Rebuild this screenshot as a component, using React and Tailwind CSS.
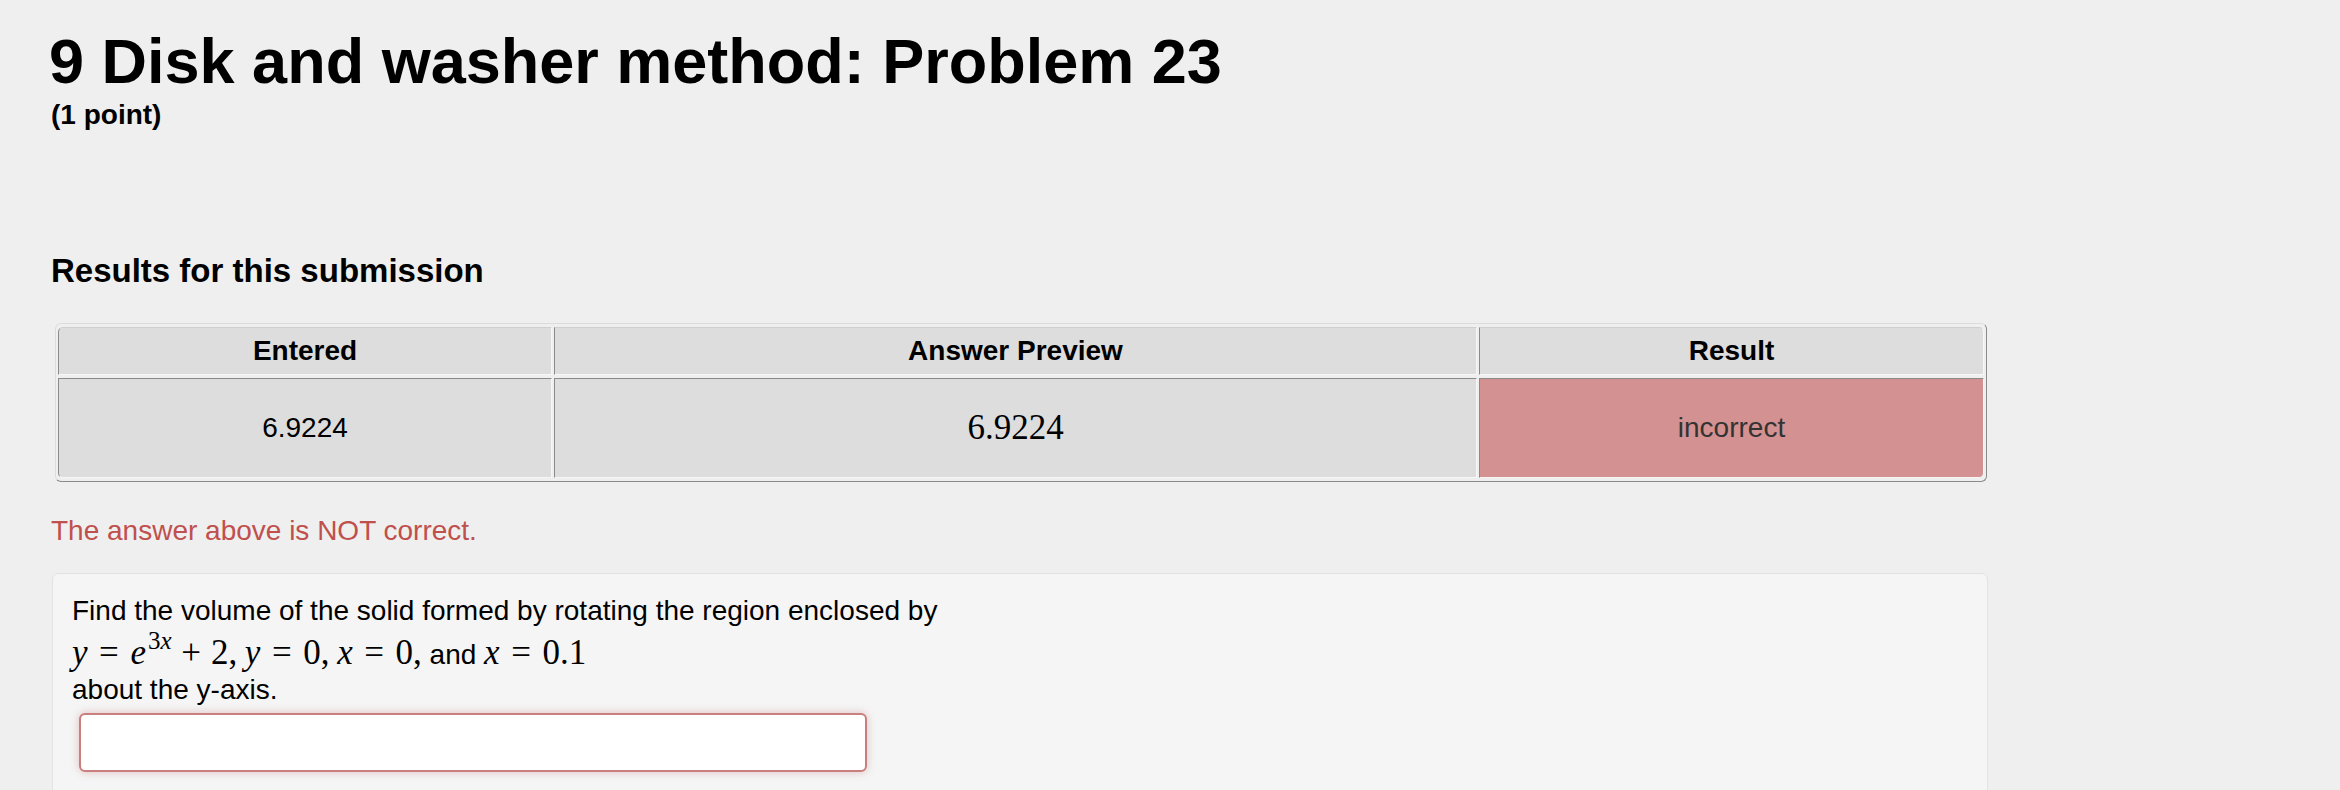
export default function App() {
  const th = 'h-[48px] p-0 text-center align-middle font-bold border border-t-[#cfcfcf] border-l-[#8a8a8a] border-r-[#f6f6f6] border-b-[#f6f6f6] bg-[#dddddd]';
  const td = 'h-[100px] p-0 text-center align-middle border border-t-[#8a8a8a] border-l-[#8a8a8a] border-r-[#f6f6f6] border-b-[#f6f6f6]';

  return (
    <div className="min-h-screen bg-[#efefef] pl-[51px] pt-[27px] pb-[40px] text-black font-['Liberation_Sans',Arial,sans-serif]">
      <h1 className="-ml-[2px] text-[63px] leading-[69px] font-bold">9 Disk and washer method: Problem 23</h1>
      <div className="mt-[3px] text-[28px] leading-[32px] font-bold">(1 point)</div>

      <h3 className="mt-[121px] text-[33px] leading-[38px] font-bold">Results for this submission</h3>

      <table className="mt-[33px] ml-[4px] w-[1932px] table-fixed border-separate border-spacing-x-[2px] border-spacing-y-[3px] border border-t-[#dcdcdc] border-l-[#dcdcdc] border-r-[#8a8a8a] border-b-[#8a8a8a] rounded-[6px] text-[28px]">
        <thead>
          <tr>
            <th className={th + ' w-[494px] rounded-tl-[5px]'}>Entered</th>
            <th className={th + ' w-[923px]'}>Answer Preview</th>
            <th className={th + ' rounded-tr-[5px]'}>Result</th>
          </tr>
        </thead>
        <tbody>
          <tr>
            <td className={td + ' bg-[#dddddd] rounded-bl-[5px]'}>6.9224</td>
            <td className={td + ' bg-[#dddddd]'}>
              <span className="font-['Liberation_Serif',serif] text-[35px]">6.9224</span>
            </td>
            <td className={td + ' bg-[#d39191] text-[#333333] rounded-br-[5px]'}>incorrect</td>
          </tr>
        </tbody>
      </table>

      <div className="mt-[33px] text-[28px] leading-[32px] text-[#c0504d]">The answer above is NOT correct.</div>

      <div className="mt-[26px] ml-[1px] w-[1936px] rounded-[6px] border border-[#e2e2e2] bg-[#f5f5f5] pl-[19px] pt-[18px] pb-[40px] text-[28px]">
        <div className="leading-[38px]">Find the volume of the solid formed by rotating the region enclosed by</div>
        <div className="mt-[4px] h-[37px] leading-[38px] whitespace-nowrap">
          <span className="font-['Liberation_Serif',serif] text-[35px]">
            <i>y</i>
            <span className="mx-[0.33em]">=</span>
            <i>e</i>
            <span className="relative -top-[15px] ml-[2px] text-[25px]">
              3<i>x</i>
            </span>
            <span className="mx-[0.28em]">+</span>
            2,<span className="ml-[0.22em]"></span>
            <i>y</i>
            <span className="mx-[0.33em]">=</span>
            0,<span className="ml-[0.22em]"></span>
            <i>x</i>
            <span className="mx-[0.33em]">=</span>
            0,
          </span>
          <span> and </span>
          <span className="font-['Liberation_Serif',serif] text-[35px]">
            <i>x</i>
            <span className="mx-[0.33em]">=</span>
            0.1
          </span>
        </div>
        <div className="leading-[38px]">about the y-axis.</div>
        <input
          type="text"
          className="mt-[4px] ml-[7px] block h-[59px] w-[788px] rounded-[6px] border-2 border-[#c97f7d] bg-white px-3 text-[28px] shadow-[0_0_9px_rgba(190,90,88,0.35)] outline-none"
        />
      </div>
    </div>
  );
}
